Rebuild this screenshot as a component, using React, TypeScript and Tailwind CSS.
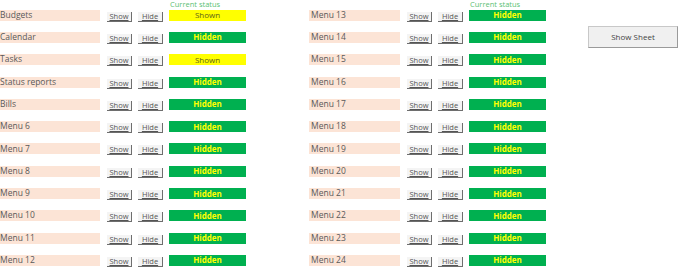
type Row = { label: string; shown?: boolean; shift?: string };

const leftRows: Row[] = [
  { label: "Budgets", shown: true },
  { label: "Calendar" },
  { label: "Tasks", shown: true },
  { label: "Status reports" },
  { label: "Bills" },
  { label: "Menu 6" },
  { label: "Menu 7", shift: "ml-[2px]" },
  { label: "Menu 8", shift: "ml-[2px]" },
  { label: "Menu 9", shift: "ml-[3px]" },
  { label: "Menu 10", shift: "ml-[3px]" },
  { label: "Menu 11", shift: "ml-[4px]" },
  { label: "Menu 12", shift: "ml-[1px]" },
];

const rightRows: Row[] = [
  { label: "Menu 13" },
  { label: "Menu 14" },
  { label: "Menu 15" },
  { label: "Menu 16" },
  { label: "Menu 17" },
  { label: "Menu 18" },
  { label: "Menu 19", shift: "ml-[2px]" },
  { label: "Menu 20", shift: "ml-[2px]" },
  { label: "Menu 21", shift: "ml-[2px]" },
  { label: "Menu 22", shift: "ml-[2px]" },
  { label: "Menu 23", shift: "ml-[2px]" },
  { label: "Menu 24", shift: "ml-[2px]" },
];

function FormButton({ text }: { text: string }) {
  return (
    <div className="mt-[3px] flex h-[10px] w-[25px] items-end justify-center border-r border-b border-[#6e6e6e] bg-[#f4f4f4] text-[7.5px] leading-[9px] text-[#555] underline">
      {text}
    </div>
  );
}

function Column({ rows, labelWidth, labelPad }: { rows: Row[]; labelWidth: string; labelPad: string }) {
  return (
    <div className="flex flex-col">
      <div className="flex h-[9px] items-start">
        <div className={`${labelWidth} shrink-0`} />
        <div className="ml-[70px] w-[77px] whitespace-nowrap text-[7.5px] leading-[8px] text-[#5cbf74]">
          Current status
        </div>
      </div>
      <div className="-mt-[5px] flex flex-col">
        {rows.map((r) => (
          <div key={r.label} className="flex h-[22.3px] items-center">
            <div
              className={`${labelWidth} ${labelPad} flex h-[11px] shrink-0 items-center bg-[#fce4d6] text-[8.5px] text-[#595959]`}
            >
              {r.label}
            </div>
            <div className={`ml-[7px] flex gap-[6px] ${r.shift ?? ""}`}>
              <FormButton text="Show" />
              <FormButton text="Hide" />
            </div>
            <div
              className={`ml-auto flex h-[11px] w-[77px] items-center justify-center text-[8px] leading-[10px] ${
                r.shown ? "bg-[#ffff00] text-[#5e5e1c]" : "bg-[#00b050] font-bold text-[#ffff00]"
              }`}
            >
              {r.shown ? "Shown" : "Hidden"}
            </div>
          </div>
        ))}
      </div>
    </div>
  );
}

export default function App() {
  return (
    <div
      className="flex h-[278px] w-[680px] bg-white"
      style={{ fontFamily: '"Open Sans", "Liberation Sans", sans-serif' }}
    >
      <div className="w-[246px]">
        <Column rows={leftRows} labelWidth="w-[100px]" labelPad="pl-0" />
      </div>
      <div className="ml-[63px] w-[237px]">
        <Column rows={rightRows} labelWidth="w-[91px]" labelPad="pl-[2px]" />
      </div>
      <div className="ml-[42px] pt-[26px]">
        <button className="flex h-[22px] w-[90px] items-center justify-center border border-[#c8c8c8] border-r-[#9a9a9a] border-b-[#9a9a9a] bg-[#f0f0f0] text-[8px] text-[#444]">
          Show Sheet
        </button>
      </div>
    </div>
  );
}
